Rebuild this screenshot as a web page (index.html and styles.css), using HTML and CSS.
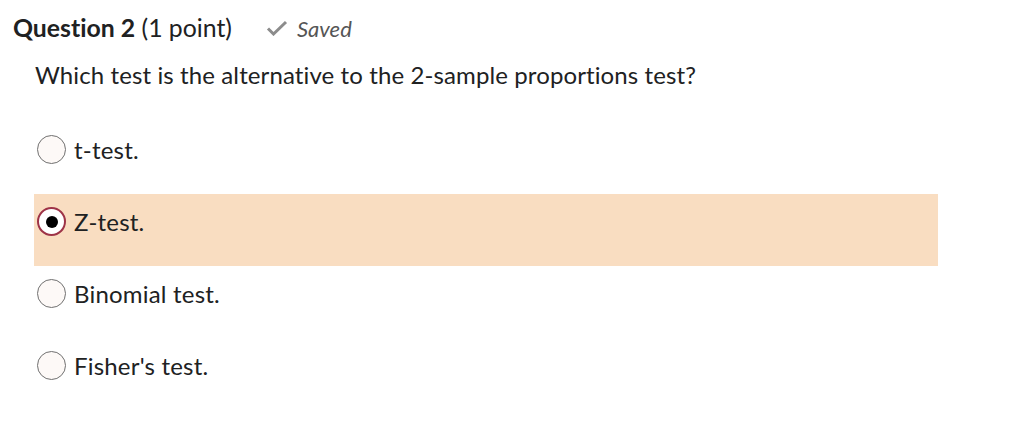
FILE: index.html
```html
<!DOCTYPE html>
<html>
<head>
<meta charset="utf-8">
<link rel="stylesheet" href="styles.css">
</head>
<body>
<div class="quiz">
  <div class="q-header">
    <h2 class="q-title"><span class="q-num">Question 2</span> (1 point)</h2>
    <span class="saved">
      <svg class="check" width="22" height="16" viewBox="0 0 22 16"><path d="M2 8.5 L7.5 14 L20 2" fill="none" stroke="#8c8c8c" stroke-width="3" stroke-linecap="butt" stroke-linejoin="miter"/></svg>
      <span class="saved-text">Saved</span>
    </span>
  </div>
  <p class="q-text">Which test is the alternative to the 2-sample proportions test?</p>
  <div class="options">
    <label class="option"><span class="radio"></span><span class="opt-text">t-test.</span></label>
    <label class="option selected"><span class="radio checked"></span><span class="opt-text">Z-test.</span></label>
    <label class="option"><span class="radio"></span><span class="opt-text">Binomial test.</span></label>
    <label class="option"><span class="radio"></span><span class="opt-text">Fisher's test.</span></label>
  </div>
</div>
</body>
</html>
```
FILE: styles.css
```css
html, body {
  margin: 0;
  padding: 0;
  background: #ffffff;
}
body {
  font-family: Lato, "Open Sans", sans-serif;
  color: #202122;
  font-variant-ligatures: none;
}
.quiz {
  padding: 13px 0 0 13px;
  width: 925px;
}
.q-header {
  display: flex;
  align-items: center;
  gap: 34px;
  height: 30px;
}
.q-title {
  margin: 0;
  font-size: 24.8px;
  line-height: 30px;
  font-weight: 400;
  color: #202122;
}
.q-num {
  font-weight: 700;
}
.saved {
  display: flex;
  align-items: center;
  gap: 9px;
  color: #555;
}
.check {
  display: block;
}
.saved-text {
  font-style: italic;
  font-size: 22px;
}
.q-text {
  margin: 17px 0 0 22px;
  font-size: 24px;
  line-height: 30px;
  letter-spacing: 0.11px;
}
.options {
  margin-top: 32px;
  margin-left: 21px;
  display: flex;
  flex-direction: column;
}
.option {
  display: flex;
  align-items: flex-start;
  gap: 8px;
  height: 72px;
  padding: 13px 0 0 3px;
  box-sizing: border-box;
  font-size: 24px;
  letter-spacing: 0.2px;
}
.option.selected {
  background: #f9ddc1;
}
.radio {
  width: 29px;
  height: 29px;
  box-sizing: border-box;
  border: 1px solid #707070;
  border-radius: 50%;
  background: #fdf9f7;
  flex: none;
}
.radio.checked {
  border: 2px solid #9e3347;
  background: #ffffff;
  position: relative;
}
.radio.checked::after {
  content: "";
  position: absolute;
  left: 6.5px;
  top: 6.5px;
  width: 12px;
  height: 12px;
  border-radius: 50%;
  background: #000;
}
.opt-text {
  line-height: 29px;
  color: #202122;
}
```
